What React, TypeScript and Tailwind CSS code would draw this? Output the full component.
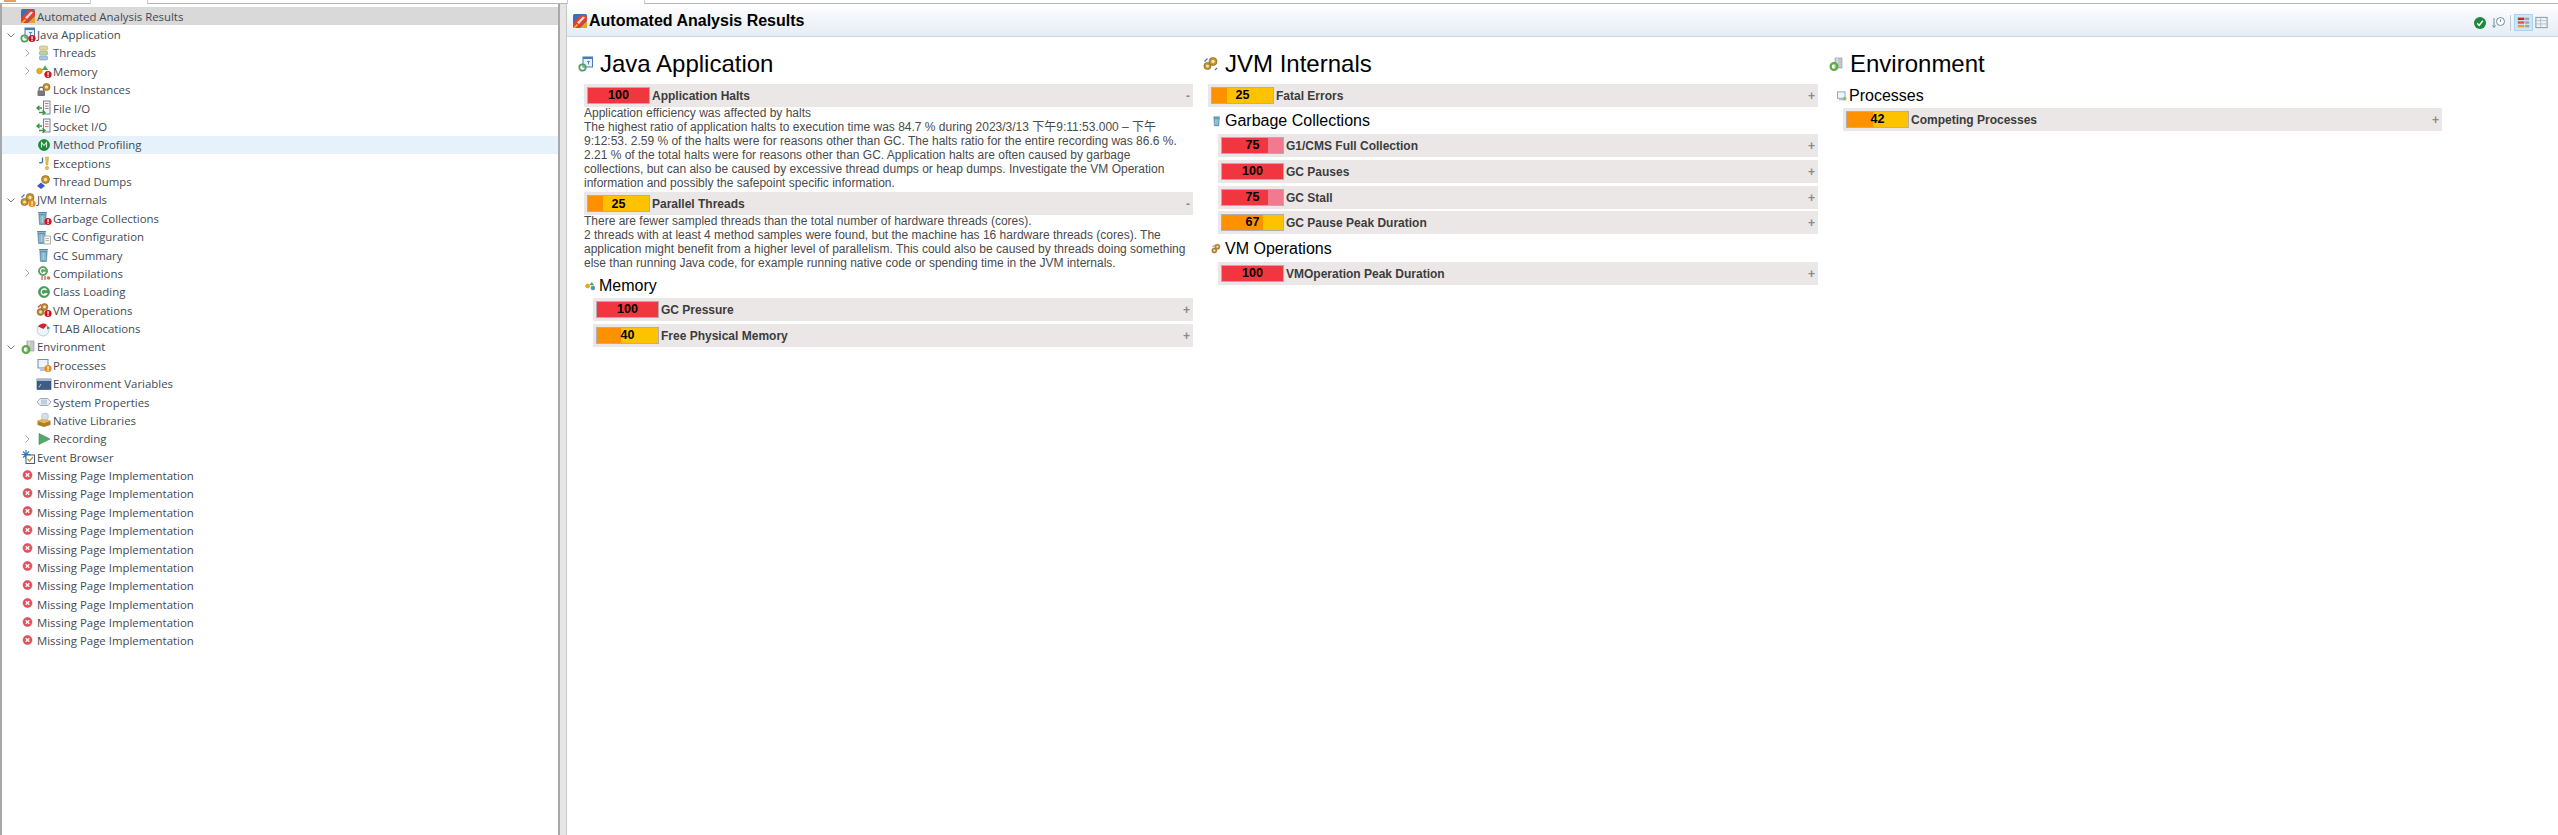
import type { ReactNode } from "react";

// small 16x16 drawings for the eclipse style icons
const Svg = ({ children, size = 16 }: { children: ReactNode; size?: number }) => (
  <svg width={size} height={size} viewBox="0 0 16 16" className="shrink-0">
    {children}
  </svg>
);

const RedBadge = () => (
  <>
    <circle cx="12" cy="11.5" r="3.6" fill="#d3121c" />
    <rect x="11.4" y="9.2" width="1.3" height="3" fill="#fff" />
    <rect x="11.4" y="12.7" width="1.3" height="1.2" fill="#fff" />
  </>
);

const OrangeBadge = () => (
  <>
    <circle cx="12" cy="11.5" r="3.6" fill="#ee8a12" />
    <rect x="11.4" y="9.2" width="1.3" height="3" fill="#fff" />
    <rect x="11.4" y="12.7" width="1.3" height="1.2" fill="#fff" />
  </>
);

const Gear = ({ x, y, r, c = "#c8922e" }: { x: number; y: number; r: number; c?: string }) => (
  <>
    <circle cx={x} cy={y} r={r} fill={c} stroke="#7c5a1c" strokeWidth="0.6" />
    <circle cx={x} cy={y} r={r * 0.42} fill="#f6e4b4" />
  </>
);

const Trash = ({ x = 3 }: { x?: number }) => (
  <>
    <rect x={x} y="2" width="9" height="1.6" rx="0.6" fill="#4f8ba8" />
    <path d={`M${x + 0.8} 4h7.4l-0.7 10.5h-6z`} fill="#6fa3bb" stroke="#40748e" strokeWidth="0.5" />
    <path d={`M${x + 3} 5.5v7.5M${x + 4.5} 5.5v7.5M${x + 6} 5.5v7.5`} stroke="#d6e8ef" strokeWidth="0.6" />
  </>
);

const Analysis = () => (
  <Svg>
    <rect x="1" y="1" width="14" height="14" rx="1.5" fill="#3a6fb0" />
    <path d="M1 10 9 2h4l2 2v3l-8 8H2.5A1.5 1.5 0 0 1 1 13.5z" fill="#e5402a" />
    <path d="M8 15l7-7v5.5a1.5 1.5 0 0 1-1.5 1.5z" fill="#f5a21c" />
    <path d="M5 9.5 11 3.5l2 1-6 6.5z" fill="#f7dad2" />
    <path d="M1 15l4-4 1 1-3 3z" fill="#f5c21c" />
  </Svg>
);

const JavaApp = ({ badge = true }: { badge?: boolean }) => (
  <Svg>
    <rect x="5" y="1" width="9.5" height="10" fill="#e8f0f8" stroke="#4a7cb0" strokeWidth="1" />
    <rect x="5" y="1" width="9.5" height="2" fill="#4a7cb0" />
    <path d="M9 5.5h3M10.5 5.5v3" stroke="#4a7cb0" strokeWidth="0.9" />
    <circle cx="4.5" cy="11.5" r="3.2" fill="none" stroke="#4fa45c" strokeWidth="1.8" />
    {badge && <RedBadge />}
  </Svg>
);

const Threads = () => (
  <Svg>
    <rect x="3.5" y="1" width="8" height="4" rx="1" fill="#e3d79b" stroke="#a99c5c" strokeWidth="0.5" />
    <rect x="3.5" y="6" width="8" height="4" rx="1" fill="#b9d3a1" stroke="#7da065" strokeWidth="0.5" />
    <rect x="3.5" y="11" width="8" height="4" rx="1" fill="#a9c5e3" stroke="#6a8fb8" strokeWidth="0.5" />
  </Svg>
);

const Memory = ({ badge = true }: { badge?: boolean }) => (
  <Svg>
    <circle cx="3.5" cy="8" r="2.8" fill="#f0a91e" stroke="#b57c10" strokeWidth="0.5" />
    <path d="M9 2.5l3.2 4.5H5.8z" fill="#4faa58" />
    {badge ? <RedBadge /> : <circle cx="10.5" cy="10.5" r="3" fill="#5b8fc7" />}
  </Svg>
);

const Lock = () => (
  <Svg>
    <path d="M3 9V7.5a2.3 2.3 0 0 1 4.6 0V9" fill="none" stroke="#666" strokeWidth="1.2" />
    <rect x="1.5" y="8.5" width="7.5" height="5.5" rx="1" fill="#777" />
    <Gear x={10.5} y={5} r={3.6} />
  </Svg>
);

const Io = () => (
  <Svg>
    <rect x="7.5" y="1" width="6.5" height="13" fill="#f3f6f8" stroke="#5f7f8f" strokeWidth="0.9" />
    <path d="M9 3.5h3.5M9 6h3.5M9 8.5h3.5" stroke="#c0564f" strokeWidth="0.8" />
    <path d="M1 8h5M3.5 5.8 1 8l2.5 2.2" fill="none" stroke="#3f9048" strokeWidth="1.3" />
    <path d="M3 12.5h6M6.5 10.3 9 12.5l-2.5 2.2" fill="none" stroke="#3f9048" strokeWidth="1.3" />
  </Svg>
);

const MethodIcon = () => (
  <Svg>
    <circle cx="8" cy="8" r="5.5" fill="#1f8a3a" stroke="#126227" strokeWidth="0.6" />
    <path d="M5.5 10.5v-5L8 8.5l2.5-3v5" fill="none" stroke="#d7f0dc" strokeWidth="1.1" />
  </Svg>
);

const Exceptions = () => (
  <Svg>
    <path d="M6.5 2.5v4a1.6 1.6 0 0 1-3 0.6" fill="none" stroke="#2e6fb5" strokeWidth="1.3" />
    <path d="M9.5 2h3l-0.6 8h-1.8z" fill="#eac23a" stroke="#b08e1c" strokeWidth="0.4" />
    <circle cx="11" cy="13" r="1.7" fill="#eac23a" stroke="#b08e1c" strokeWidth="0.4" />
  </Svg>
);

const ThreadDump = () => (
  <Svg>
    <Gear x={9.5} y={5.5} r={4} />
    <path d="M1 12l4-3.5 4 3.5-4 3z" fill="#3a55d6" />
  </Svg>
);

const Jvm = ({ badge = true }: { badge?: boolean }) => (
  <Svg>
    <Gear x={4.5} y={10} r={3.6} />
    <Gear x={10} y={5.5} r={4} />
    <path d="M1.5 5.5 4.5 2.5M14 12l-2 2" stroke="#3e78b8" strokeWidth="1.2" />
    {badge && <OrangeBadge />}
  </Svg>
);

const VmOps = ({ badge = true }: { badge?: boolean }) => (
  <Svg>
    <Gear x={4.5} y={10} r={3.4} c="#b98a3e" />
    <Gear x={8.5} y={5} r={3.4} c="#b98a3e" />
    <path d="M2 5.5 5 2.5" stroke="#c84a3a" strokeWidth="1.2" />
    {badge && <RedBadge />}
  </Svg>
);

const GcBadge = () => (
  <Svg>
    <Trash x={2} />
    <RedBadge />
  </Svg>
);

const GcConfig = () => (
  <Svg>
    <Trash x={1} />
    <rect x="8" y="7" width="6.5" height="8" fill="#f5f8fa" stroke="#8ba3b0" strokeWidth="0.8" />
    <path d="M9.5 9.5h3.5M9.5 11.5h3.5" stroke="#d6a23a" strokeWidth="0.8" />
  </Svg>
);

const GcSummary = () => (
  <Svg>
    <Trash />
  </Svg>
);

const Compilations = () => (
  <Svg>
    <circle cx="7" cy="6" r="4.6" fill="#5aa864" stroke="#35793f" strokeWidth="0.5" />
    <path d="M9 4.6a2.5 2.5 0 1 0 0 2.8H7" fill="none" stroke="#fff" strokeWidth="1.1" />
    <path d="M6 11v4M9 11v4" stroke="#c65a3a" strokeWidth="1.2" />
    <circle cx="12.5" cy="13" r="1.8" fill="#d9743a" />
  </Svg>
);

const ClassLoading = () => (
  <Svg>
    <circle cx="8" cy="8" r="5.5" fill="#4ca25a" stroke="#2f7a3c" strokeWidth="0.6" />
    <path d="M10.5 6a3 3 0 1 0 0 4H8" fill="none" stroke="#fff" strokeWidth="1.3" />
  </Svg>
);

const Tlab = () => (
  <Svg>
    <circle cx="7" cy="9" r="6" fill="#eef3f6" stroke="#9bb3c2" strokeWidth="0.6" />
    <path d="M2 5.5a6 6 0 0 1 9-1.5L7.5 8z" fill="#d81f2a" />
    <path d="M11 5l3.5 2-3.5 1.5z" fill="#2ba0a8" />
  </Svg>
);

const EnvIcon = () => (
  <Svg>
    <rect x="7" y="2" width="7" height="10" fill="#c4c8cc" stroke="#8d9398" strokeWidth="0.6" />
    <path d="M9 2v8" stroke="#e6e8ea" />
    <circle cx="6" cy="10.5" r="3.4" fill="none" stroke="#59ad3f" strokeWidth="2.2" />
  </Svg>
);

const Processes = ({ small = false }: { small?: boolean }) => (
  <Svg>
    <rect x="2" y="2.5" width="10" height="8.5" fill="#eef4fa" stroke="#6f90b0" strokeWidth="1" />
    <path d="M4 13h6" stroke="#6f90b0" strokeWidth="1" />
    {small ? <circle cx="11.5" cy="11.5" r="2.6" fill="#9ab86a" /> : <OrangeBadge />}
  </Svg>
);

const EnvVars = () => (
  <Svg>
    <rect x="1" y="3" width="14" height="10.5" fill="#3d5c86" stroke="#2c4566" strokeWidth="0.6" />
    <rect x="1" y="3" width="14" height="2" fill="#a4b8cf" />
    <path d="M3 11.5l2-3.5" stroke="#dbe6f2" strokeWidth="0.8" />
  </Svg>
);

const SysProps = () => (
  <Svg>
    <path d="M1 8l3-3.5h8L15 8l-3 3.5H4z" fill="#e9eff4" stroke="#8fa6b8" strokeWidth="0.9" />
    <path d="M6 5.5v5M8 5.5v5M10 5.5v5" stroke="#8fa6b8" strokeWidth="0.9" />
  </Svg>
);

const Native = () => (
  <Svg>
    <path d="M1.5 8.5 8 11l6.5-2.5V13L8 15l-6.5-2z" fill="#b07f2a" />
    <path d="M1.5 8.5 8 6l6.5 2.5L8 11z" fill="#e5b44c" />
    <circle cx="9" cy="4.5" r="3.5" fill="#d6dfe6" stroke="#9aa8b3" strokeWidth="0.5" />
  </Svg>
);

const Recording = () => (
  <Svg>
    <path d="M3 2.5 14 8 3 13.5z" fill="#54a868" stroke="#3a8a4e" strokeWidth="0.6" />
  </Svg>
);

const EventBrowser = () => (
  <Svg>
    <path d="M6 1v9M1.5 5.5h9M3 2.5l6 6M9 2.5l-6 6" stroke="#2f7fc1" strokeWidth="1.2" />
    <rect x="6" y="6" width="8.5" height="8.5" fill="#fff" stroke="#33628f" strokeWidth="1" />
    <path d="M7.5 10l2 2 3.5-4" fill="none" stroke="#d28a1a" strokeWidth="1.2" />
  </Svg>
);

const ErrorIcon = () => (
  <Svg>
    <circle cx="7.5" cy="7" r="4.5" fill="#e5525c" stroke="#c93a46" strokeWidth="0.5" />
    <path d="M5.7 5.2l3.6 3.6M9.3 5.2l-3.6 3.6" stroke="#fff" strokeWidth="1.3" />
  </Svg>
);

const ChevronDown = () => (
  <svg width="10" height="10" viewBox="0 0 10 10">
    <path d="M1.5 3.5 5 7l3.5-3.5" fill="none" stroke="#777" strokeWidth="1" />
  </svg>
);

const ChevronRight = () => (
  <svg width="10" height="10" viewBox="0 0 10 10">
    <path d="M3.5 1.5 7 5 3.5 8.5" fill="none" stroke="#aaa" strokeWidth="1" />
  </svg>
);

type TreeItem = {
  label: string;
  icon: ReactNode;
  level?: number;
  toggle?: "open" | "closed";
  rowClass?: string;
};

const treeItems: TreeItem[] = [
  { label: "Automated Analysis Results", icon: <Analysis />, rowClass: "bg-[#d9d9d9]" },
  { label: "Java Application", icon: <JavaApp />, toggle: "open" },
  { label: "Threads", icon: <Threads />, level: 1, toggle: "closed" },
  { label: "Memory", icon: <Memory />, level: 1, toggle: "closed" },
  { label: "Lock Instances", icon: <Lock />, level: 1 },
  { label: "File I/O", icon: <Io />, level: 1 },
  { label: "Socket I/O", icon: <Io />, level: 1 },
  { label: "Method Profiling", icon: <MethodIcon />, level: 1, rowClass: "bg-[#e5f1fb]" },
  { label: "Exceptions", icon: <Exceptions />, level: 1 },
  { label: "Thread Dumps", icon: <ThreadDump />, level: 1 },
  { label: "JVM Internals", icon: <Jvm />, toggle: "open" },
  { label: "Garbage Collections", icon: <GcBadge />, level: 1 },
  { label: "GC Configuration", icon: <GcConfig />, level: 1 },
  { label: "GC Summary", icon: <GcSummary />, level: 1 },
  { label: "Compilations", icon: <Compilations />, level: 1, toggle: "closed" },
  { label: "Class Loading", icon: <ClassLoading />, level: 1 },
  { label: "VM Operations", icon: <VmOps />, level: 1 },
  { label: "TLAB Allocations", icon: <Tlab />, level: 1 },
  { label: "Environment", icon: <EnvIcon />, toggle: "open" },
  { label: "Processes", icon: <Processes />, level: 1 },
  { label: "Environment Variables", icon: <EnvVars />, level: 1 },
  { label: "System Properties", icon: <SysProps />, level: 1 },
  { label: "Native Libraries", icon: <Native />, level: 1 },
  { label: "Recording", icon: <Recording />, level: 1, toggle: "closed" },
  { label: "Event Browser", icon: <EventBrowser /> },
  ...Array.from({ length: 10 }, () => ({ label: "Missing Page Implementation", icon: <ErrorIcon /> })),
];

const TreeRow = ({ item }: { item: TreeItem }) => (
  <div className={`flex h-[18.38px] items-center ${item.rowClass ?? ""}`}>
    <div className={`flex w-[18px] shrink-0 justify-end ${item.level ? "ml-[16px]" : ""}`}>
      <div className="flex w-[14px] justify-start">
        {item.toggle === "open" && <ChevronDown />}
        {item.toggle === "closed" && <ChevronRight />}
      </div>
    </div>
    {item.icon}
    <span className="ml-[1px] whitespace-nowrap">{item.label}</span>
  </div>
);

const Score = ({ value, fill, tone }: { value: number; fill: number; tone: "red" | "pink" | "orange" }) => {
  const back = tone === "red" ? "bg-[#f2363f]" : tone === "pink" ? "bg-[#f27a8e]" : "bg-[#ffc200]";
  const front = tone === "orange" ? "bg-[#ff9000]" : "bg-[#f2363f]";
  return (
    <div className={`relative h-[17px] w-[63px] shrink-0 overflow-hidden border border-[#b3aeae] ${back}`}>
      <div className={`h-full ${front}`} style={{ width: `${fill}%` }} />
      <span className="absolute inset-0 flex items-center justify-center text-[12.5px] font-bold text-black">
        {value}
      </span>
    </div>
  );
};

const Rule = ({
  value,
  tone,
  label,
  open,
  className = "",
}: {
  value: number;
  tone: "red" | "pink" | "orange";
  label: string;
  open?: boolean;
  className?: string;
}) => (
  <div className={`flex h-[23px] items-center bg-[#ebe7e7] pl-[3px] pr-[3px] ${className}`}>
    <Score value={value} fill={tone === "pink" ? 75 : value} tone={tone} />
    <span className="ml-[2px] flex-1 text-[12px] font-bold text-[#3c3c3c]">{label}</span>
    <span className="text-[12px] font-bold text-[#8a8a8a]">{open ? "-" : "+"}</span>
  </div>
);

const Heading = ({ icon, children, className = "" }: { icon: ReactNode; children: ReactNode; className?: string }) => (
  <div className={`flex h-[28px] items-center text-[24px] text-black ${className}`}>
    <span className="mr-[6px] flex w-[17px] justify-center">{icon}</span>
    {children}
  </div>
);

const SubHeading = ({ icon, children, className = "" }: { icon: ReactNode; children: ReactNode; className?: string }) => (
  <div className={`flex h-[18px] items-center text-[16px] text-black ${className}`}>
    <span className="flex w-[13px] justify-center">
      <Svg size={12}>{icon}</Svg>
    </span>
    <span>{children}</span>
  </div>
);

const App = () => {
  return (
    <div className="flex h-screen w-full flex-col overflow-hidden bg-white">
      {/* tab strip, almost entirely cropped away */}
      <div className="flex h-[4px] shrink-0 border-b border-[#b5b5b5] bg-white">
        <div className="ml-[4px] h-[2px] w-[12px] bg-[#e8a060]" />
        <div className="ml-[74px] h-[4px] w-[58px] border-x border-[#c8c8c8] bg-white" />
        <div className="ml-[419px] h-[4px] w-[78px] border-x border-[#c8c8c8] bg-white" />
      </div>

      <div className="flex min-h-0 flex-1">
        {/* left tree */}
        <div className="flex w-[560px] shrink-0 flex-col border-l-2 border-r-2 border-[#a8a8a8] pt-[3px] text-[11.4px] text-[#3f4a55] [font-family:'Open_Sans','Noto_Sans',sans-serif]">
          {treeItems.map((item, i) => (
            <TreeRow key={i} item={item} />
          ))}
        </div>
        <div className="w-[6px] shrink-0 bg-[#e6e6e6]" />

        {/* results page */}
        <div className="flex min-w-0 flex-1 flex-col border-l border-[#c8c8c8] [font-family:'Liberation_Sans','Noto_Sans_CJK_SC',sans-serif]">
          <div className="flex h-[33px] shrink-0 items-center border-b border-[#c5d8ea] bg-gradient-to-b from-white to-[#e4ecf4] pl-[5px] pr-[9px] pt-[2px]">
            <Analysis />
            <span className="ml-[1px] flex-1 text-[16px] font-bold text-black">Automated Analysis Results</span>
            <div className="mt-[3px] flex items-center">
              <Svg>
                <circle cx="8" cy="8" r="6" fill="#1c8a3c" />
                <path d="M5.2 8.2l2 2.2 3.6-4.6" fill="none" stroke="#fff" strokeWidth="1.5" />
              </Svg>
              <span className="ml-[3px]">
                <Svg>
                  <circle cx="9.5" cy="6.5" r="4" fill="#fff" stroke="#6f8ba3" strokeWidth="1" />
                  <path d="M9.5 4.5v2.3M3 3v9M1.5 10.5 3 12.5l1.5-2" fill="none" stroke="#6f8ba3" strokeWidth="1" />
                </Svg>
              </span>
              <span className="ml-[3px] h-[16px] w-px bg-[#c0c8d0]" />
              <span className="ml-[3px] flex h-[17px] w-[19px] items-center justify-center border border-[#a9d2f2] bg-[#cde6f8]">
                <Svg size={13}>
                  <rect x="1" y="2" width="8" height="3" fill="#d3202a" />
                  <rect x="10" y="2" width="5" height="3" fill="#9aa5ad" />
                  <rect x="1" y="6.5" width="8" height="3" fill="#e0555c" />
                  <rect x="10" y="6.5" width="5" height="3" fill="#9aa5ad" />
                  <rect x="1" y="11" width="8" height="3" fill="#eba02c" />
                  <rect x="10" y="11" width="5" height="3" fill="#9aa5ad" />
                </Svg>
              </span>
              <span className="ml-[1px]">
                <Svg size={15}>
                  <rect x="2" y="2.5" width="12" height="11" fill="#eef3f7" stroke="#84939f" strokeWidth="1" />
                  <path d="M2 6h12M2 9.5h12M7 2.5v11" stroke="#a9b5bf" strokeWidth="0.8" />
                </Svg>
              </span>
            </div>
          </div>

          <div className="flex gap-[10px] pl-[10px] pt-[13px]">
            {/* Java Application */}
            <div className="w-[616px] shrink-0">
              <Heading icon={<JavaApp badge={false} />}>Java Application</Heading>
              <div className="ml-[7px] mt-[6px]">
                <Rule value={100} tone="red" label="Application Halts" open />
                <p className="text-[12px] leading-[13.9px] text-[#4a4a4a]">
                  Application efficiency was affected by halts
                  <br />
                  The highest ratio of application halts to execution time was 84.7 % during 2023/3/13 下午9:11:53.000 – 下午 9:12:53. 2.59 % of the halts were for reasons other than GC. The halts ratio for the entire recording was 86.6 %. 2.21 % of the total halts were for reasons other than GC. Application halts are often caused by garbage collections, but can also be caused by excessive thread dumps or heap dumps. Investigate the VM Operation information and possibly the safepoint specific information.
                </p>
                <Rule className="mt-[2px]" value={25} tone="orange" label="Parallel Threads" open />
                <p className="text-[12px] leading-[13.9px] text-[#4a4a4a]">
                  There are fewer sampled threads than the total number of hardware threads (cores).
                  <br />
                  2 threads with at least 4 method samples were found, but the machine has 16 hardware threads (cores). The application might benefit from a higher level of parallelism. This could also be caused by threads doing something else than running Java code, for example running native code or spending time in the JVM internals.
                </p>
                <SubHeading className="mt-[6px]" icon={<Memory badge={false} />}>
                  <span className="ml-[2px]">Memory</span>
                </SubHeading>
                <Rule className="ml-[9px] mt-[3px]" value={100} tone="red" label="GC Pressure" />
                <Rule className="ml-[9px] mt-[3px]" value={40} tone="orange" label="Free Physical Memory" />
              </div>
            </div>

            {/* JVM Internals */}
            <div className="w-[615px] shrink-0">
              <Heading className="-ml-px" icon={<Jvm badge={false} />}>JVM Internals</Heading>
              <div className="ml-[5px] mt-[6px]">
                <Rule value={25} tone="orange" label="Fatal Errors" />
                <SubHeading className="ml-[2px] mt-[5px]" icon={<Trash />}>
                  <span className="ml-[2px]">Garbage Collections</span>
                </SubHeading>
                <Rule className="ml-[10px] mt-[4px]" value={75} tone="pink" label="G1/CMS Full Collection" />
                <Rule className="ml-[10px] mt-[3px]" value={100} tone="red" label="GC Pauses" />
                <Rule className="ml-[10px] mt-[3px]" value={75} tone="pink" label="GC Stall" />
                <Rule className="ml-[10px] mt-[2px]" value={67} tone="orange" label="GC Pause Peak Duration" />
                <SubHeading className="ml-[2px] mt-[6px]" icon={<VmOps badge={false} />}>
                  <span className="ml-[2px]">VM Operations</span>
                </SubHeading>
                <Rule className="ml-[10px] mt-[4px]" value={100} tone="red" label="VMOperation Peak Duration" />
              </div>
            </div>

            {/* Environment */}
            <div className="w-[614px] shrink-0">
              <Heading className="-ml-px" icon={<EnvIcon />}>Environment</Heading>
              <div className="mt-[9px]">
                <SubHeading className="ml-[7px]" icon={<Processes small />}>
                  <span className="ml-[1px]">Processes</span>
                </SubHeading>
                <Rule className="ml-[15px] mt-[3px]" value={42} tone="orange" label="Competing Processes" />
              </div>
            </div>
          </div>
        </div>
      </div>
    </div>
  );
};

export default App;
